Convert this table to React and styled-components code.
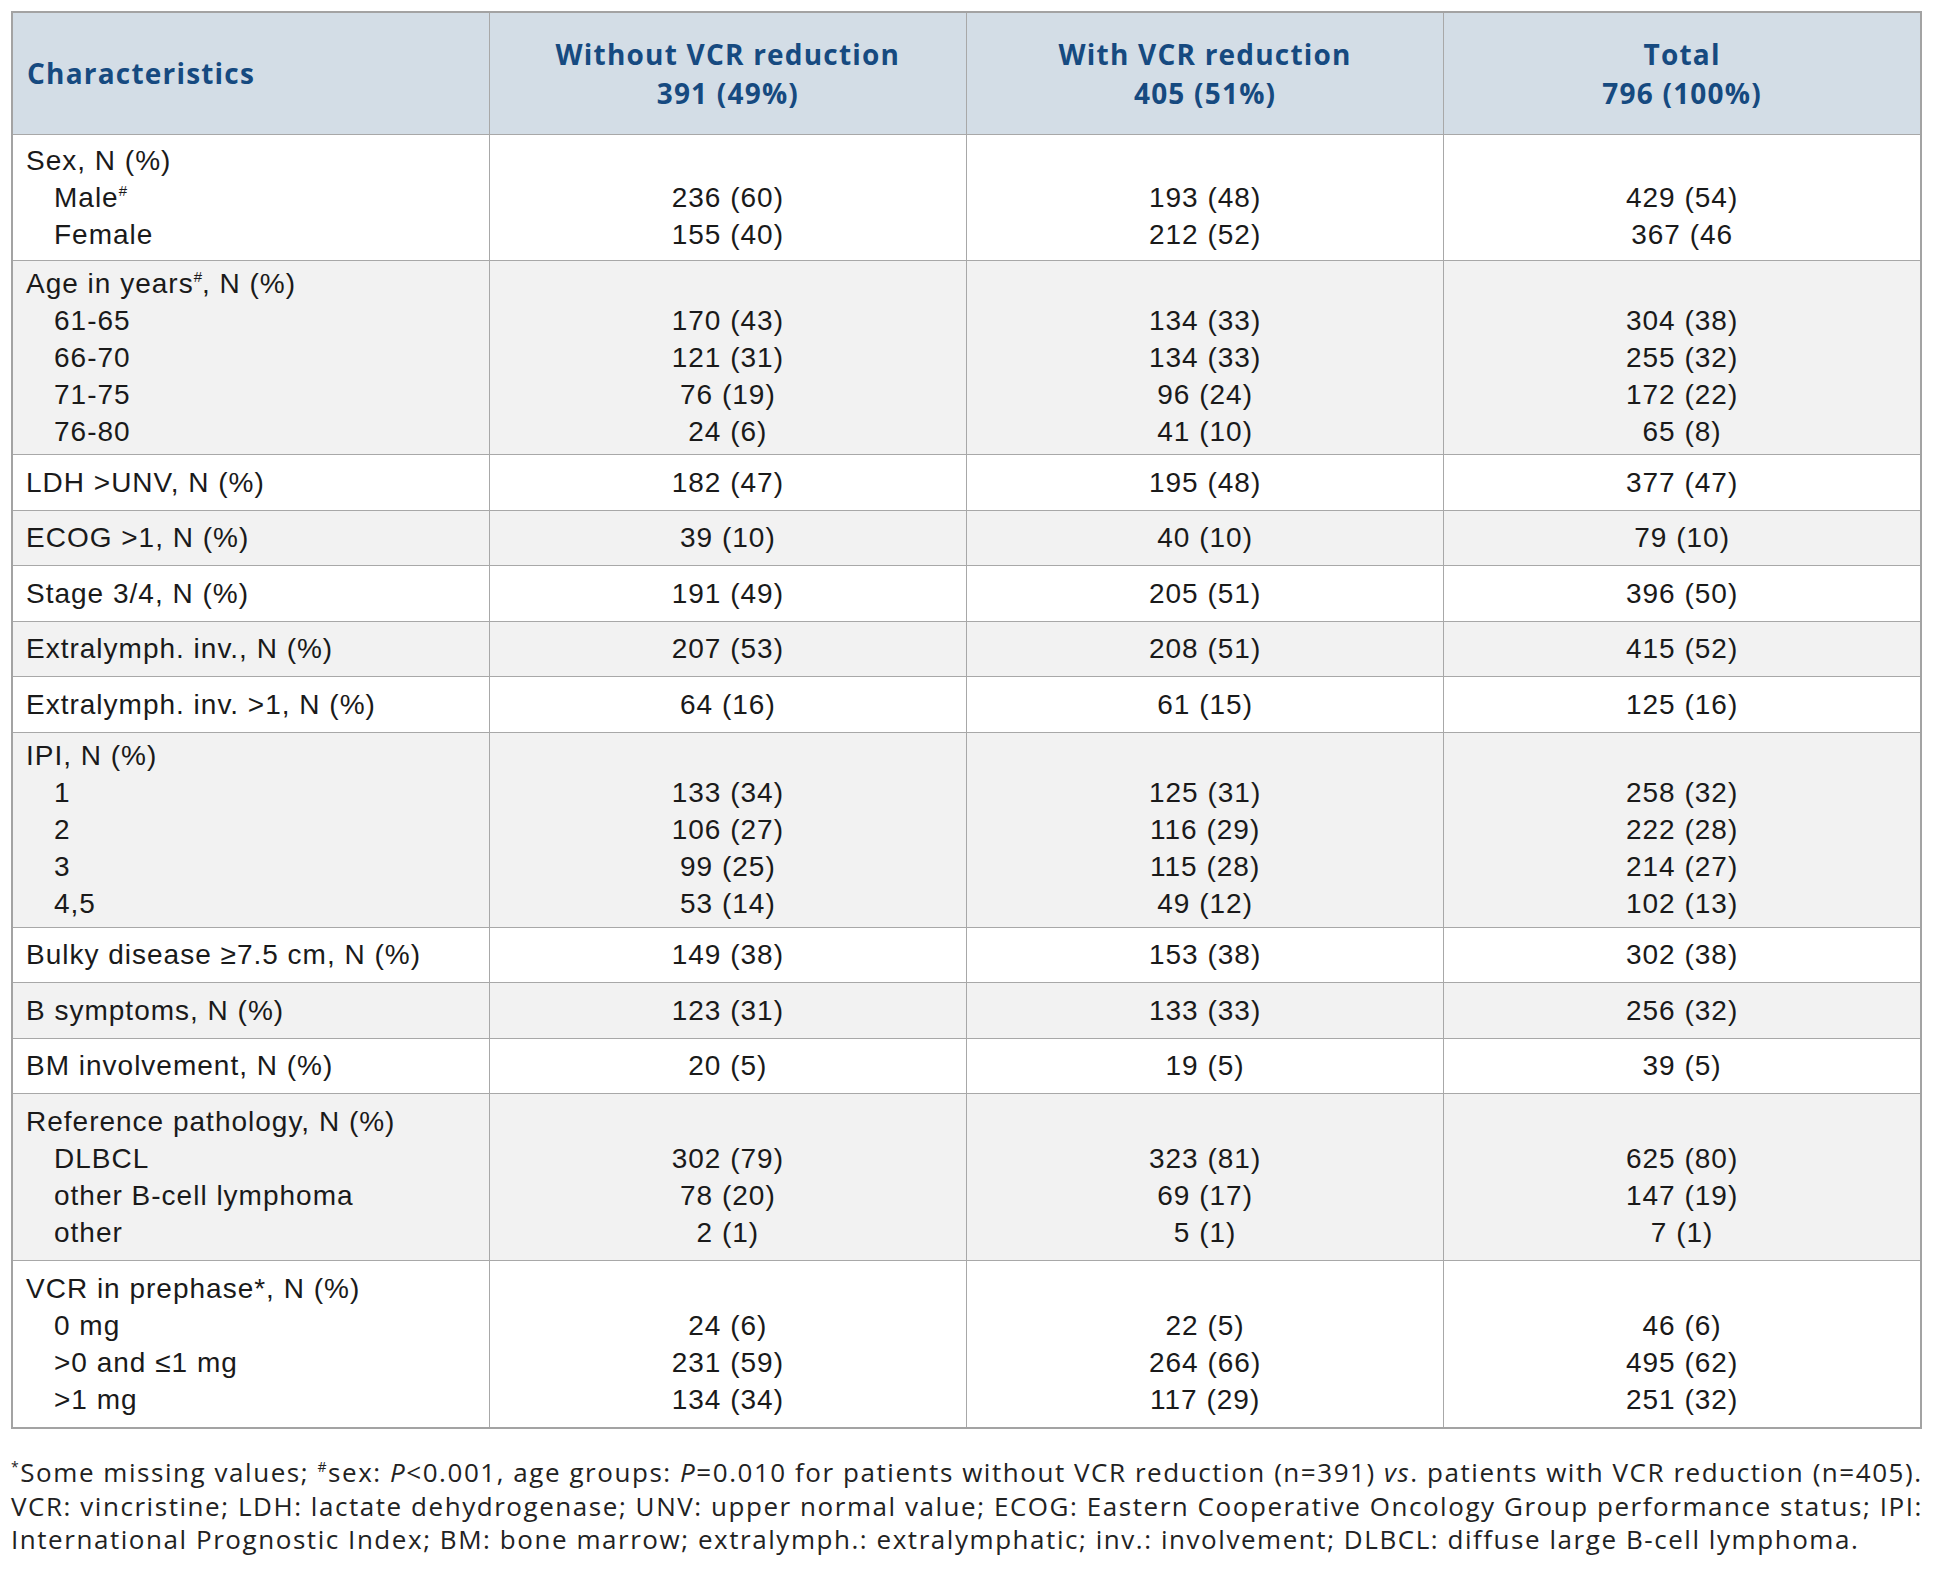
import styled, { createGlobalStyle } from "styled-components";

const GlobalStyle = createGlobalStyle`
  html, body {
    margin: 0;
    padding: 0;
    background: #ffffff;
  }
`;

const Page = styled.div`
  width: 1934px;
  padding: 11px 0 0 11px;
  box-sizing: border-box;
`;

const Table = styled.table`
  width: 1911px;
  border-collapse: collapse;
  table-layout: fixed;
  border: 2px solid #a3a3a3;
`;

const HeadCell = styled.th`
  height: 121px;
  padding: 0 14px;
  background: #d3dde6;
  color: #164a80;
  font-family: "Open Sans", "Noto Sans", sans-serif;
  font-weight: 700;
  font-size: 28px;
  letter-spacing: 1.2px;
  line-height: 39px;
  text-align: ${(p) => (p.left ? "left" : "center")};
  vertical-align: middle;
  border: 1px solid #a8a8a8;
`;

const Row = styled.tr`
  background: ${(p) => (p.shade ? "#f2f2f2" : "#ffffff")};
  height: ${(p) => (p.single ? "55.5px" : "auto")};
`;

const Cell = styled.td`
  padding: ${(p) => (p.pad != null ? `${p.pad}px 13px` : "8px 13px")};
  border: 1px solid #a8a8a8;
  color: #1a1a1a;
  font-family: "Liberation Sans", Arial, sans-serif;
  font-size: 28px;
  letter-spacing: 1px;
  line-height: 37px;
  text-align: ${(p) => (p.left ? "left" : "center")};
  vertical-align: middle;
`;

const Line = styled.div`
  min-height: 37px;
  padding-left: ${(p) => (p.indent ? "28px" : "0")};
  white-space: nowrap;
`;

const Sup = styled.sup`
  font-size: 15px;
  line-height: 0;
  vertical-align: 11px;
  letter-spacing: 0;
`;

const Footnote = styled.div`
  width: 1915px;
  padding-top: 27px;
  font-family: "Open Sans", "Noto Sans", sans-serif;
  font-size: 26px;
  letter-spacing: 1.55px;
  line-height: 33.5px;
  color: #222222;
`;

const NoteLine = styled.div`
  white-space: nowrap;
`;

const FootSup = styled.sup`
  font-size: 14px;
  line-height: 0;
  vertical-align: 10px;
`;

const rows = [
  {
    title: "Sex, N (%)",
    pad: 7,
    items: [
      [<>Male<Sup>#</Sup></>, "236 (60)", "193 (48)", "429 (54)"],
      ["Female", "155 (40)", "212 (52)", "367 (46"],
    ],
  },
  {
    title: <>Age in years<Sup>#</Sup>, N (%)</>,
    pad: 4,
    items: [
      ["61-65", "170 (43)", "134 (33)", "304 (38)"],
      ["66-70", "121 (31)", "134 (33)", "255 (32)"],
      ["71-75", "76 (19)", "96 (24)", "172 (22)"],
      ["76-80", "24 (6)", "41 (10)", "65 (8)"],
    ],
  },
  { title: "LDH >UNV, N (%)", values: ["182 (47)", "195 (48)", "377 (47)"] },
  { title: "ECOG >1, N (%)", values: ["39 (10)", "40 (10)", "79 (10)"] },
  { title: "Stage 3/4, N (%)", values: ["191 (49)", "205 (51)", "396 (50)"] },
  { title: "Extralymph. inv., N (%)", values: ["207 (53)", "208 (51)", "415 (52)"] },
  { title: "Extralymph. inv. >1, N (%)", values: ["64 (16)", "61 (15)", "125 (16)"] },
  {
    title: "IPI, N (%)",
    pad: 4.5,
    items: [
      ["1", "133 (34)", "125 (31)", "258 (32)"],
      ["2", "106 (27)", "116 (29)", "222 (28)"],
      ["3", "99 (25)", "115 (28)", "214 (27)"],
      ["4,5", "53 (14)", "49 (12)", "102 (13)"],
    ],
  },
  { title: "Bulky disease ≥7.5 cm, N (%)", values: ["149 (38)", "153 (38)", "302 (38)"] },
  { title: "B symptoms, N (%)", values: ["123 (31)", "133 (33)", "256 (32)"] },
  { title: "BM involvement, N (%)", values: ["20 (5)", "19 (5)", "39 (5)"] },
  {
    title: "Reference pathology, N (%)",
    pad: 9,
    items: [
      ["DLBCL", "302 (79)", "323 (81)", "625 (80)"],
      ["other B-cell lymphoma", "78 (20)", "69 (17)", "147 (19)"],
      ["other", "2 (1)", "5 (1)", "7 (1)"],
    ],
  },
  {
    title: "VCR in prephase*, N (%)",
    pad: 9,
    items: [
      ["0 mg", "24 (6)", "22 (5)", "46 (6)"],
      [">0 and ≤1 mg", "231 (59)", "264 (66)", "495 (62)"],
      [">1 mg", "134 (34)", "117 (29)", "251 (32)"],
    ],
  },
];

const GroupRow = ({ row, shade }) => {
  if (row.values) {
    return (
      <Row shade={shade} single>
        <Cell left>{row.title}</Cell>
        {row.values.map((v, i) => (
          <Cell key={i}>{v}</Cell>
        ))}
      </Row>
    );
  }
  return (
    <Row shade={shade}>
      <Cell left pad={row.pad}>
        <Line>{row.title}</Line>
        {row.items.map((it, i) => (
          <Line indent key={i}>{it[0]}</Line>
        ))}
      </Cell>
      {[1, 2, 3].map((c) => (
        <Cell key={c} pad={row.pad}>
          <Line />
          {row.items.map((it, i) => (
            <Line key={i}>{it[c]}</Line>
          ))}
        </Cell>
      ))}
    </Row>
  );
};

export default function App() {
  return (
    <Page>
      <GlobalStyle />
      <Table>
        <thead>
          <tr>
            <HeadCell left>Characteristics</HeadCell>
            <HeadCell>Without VCR reduction<br />391 (49%)</HeadCell>
            <HeadCell>With VCR reduction<br />405 (51%)</HeadCell>
            <HeadCell>Total<br />796 (100%)</HeadCell>
          </tr>
        </thead>
        <tbody>
          {rows.map((r, i) => (
            <GroupRow key={i} row={r} shade={i % 2 === 1} />
          ))}
        </tbody>
      </Table>
      <Footnote>
        <NoteLine>
          <FootSup>*</FootSup>Some missing values; <FootSup>#</FootSup>sex: <i>P</i>&lt;0.001, age groups: <i>P</i>=0.010 for patients without VCR reduction (n=391) <i>vs</i>. patients with VCR reduction (n=405).
        </NoteLine>
        <NoteLine>
          VCR: vincristine; LDH: lactate dehydrogenase; UNV: upper normal value; ECOG: Eastern Cooperative Oncology Group performance status; IPI:
        </NoteLine>
        <NoteLine>
          International Prognostic Index; BM: bone marrow; extralymph.: extralymphatic; inv.: involvement; DLBCL: diffuse large B-cell lymphoma.
        </NoteLine>
      </Footnote>
    </Page>
  );
}
